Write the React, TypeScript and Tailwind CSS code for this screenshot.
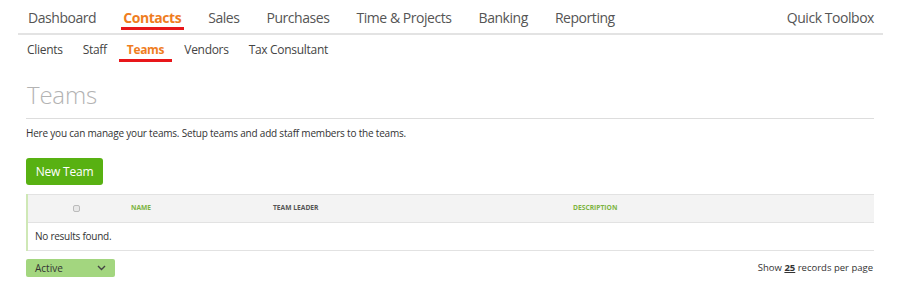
import React from "react";

const topItems = ["Dashboard", "Contacts", "Sales", "Purchases", "Time & Projects", "Banking", "Reporting"];
const subItems = ["Clients", "Staff", "Teams", "Vendors", "Tax Consultant"];

export default function App() {
  return (
    <div className="w-[920px] h-[297px] bg-white overflow-hidden" style={{ fontFamily: '"Open Sans", sans-serif' }}>
      {/* Top nav */}
      <div className="ml-[18px] w-[865px] h-[35px] border-b-2 border-[#e3e3e3] flex items-start pt-[8px] pl-[10px] pr-[9px]">
        <div className="flex gap-[27px]">
          {topItems.map((t) => (
            <div
              key={t}
              className={`relative text-[14px] leading-[20px] tracking-[-0.45px] ${t === "Contacts" ? "text-[#ef7d1f] font-bold" : "text-[#555]"}`}
            >
              {t}
              {t === "Contacts" && <span className="absolute left-[-2px] right-[-3px] top-[19px] h-[3px] bg-[#e8161a]" />}
            </div>
          ))}
        </div>
        <div className="ml-auto text-[14px] leading-[20px] tracking-[-0.45px] text-[#555]">Quick Toolbox</div>
      </div>
      {/* Sub nav */}
      <div className="ml-[27px] pt-[6px] flex gap-[20px]">
        {subItems.map((t) => (
          <div
            key={t}
            className={`relative text-[12px] leading-[18px] tracking-[-0.3px] ${t === "Teams" ? "text-[#ef7d1f] font-bold" : "text-[#444]"}`}
          >
            {t}
            {t === "Teams" && <span className="absolute left-[-8px] right-[-8px] top-[18px] h-[3px] bg-[#e8161a]" />}
          </div>
        ))}
      </div>
      {/* Content */}
      <div className="ml-[26px] w-[848px] mt-[21px]">
        <div className="h-[38px] pl-[1px] text-[24px] leading-[30px] font-light text-[#b3b3b3] tracking-[-0.2px]">Teams</div>
        <div className="border-t border-[#dddddd]" />
        <div className="mt-[7px] text-[10px] leading-[14px] tracking-[-0.2px] text-[#333]">
          Here you can manage your teams. Setup teams and add staff members to the teams.
        </div>
        <button className="mt-[18px] w-[77px] h-[27px] rounded-[3px] bg-[#58b112] text-white text-[12px] tracking-[-0.2px] leading-[27px] text-center">
          New Team
        </button>
        {/* Table */}
        <div className="mt-[9px] border-l-2 border-[#cfe8b6]">
          <div className="h-[29px] bg-[#f3f3f3] border-t border-b border-[#e2e2e2] flex items-center text-[6.7px] font-bold">
            <div className="w-[96px] flex justify-center">
              <span className="w-[7px] h-[7px] rounded-[2px] border border-[#bbb] bg-[#e8e8e8]" />
            </div>
            <div className="w-[149px] pl-[7px] text-[#7cb342]">NAME</div>
            <div className="w-[300px] text-[#555]">TEAM LEADER</div>
            <div className="text-[#7cb342]">DESCRIPTION</div>
          </div>
          <div className="h-[28px] border-b border-[#e2e2e2] flex items-center pl-[7px] text-[10px] tracking-[-0.25px] text-[#333]">
            No results found.
          </div>
        </div>
        <div className="mt-[8px] flex items-center justify-between">
          <div className="w-[89px] h-[18px] rounded-[2px] bg-[#a3d67f] flex items-center justify-between pl-[9px] pr-[9px] text-[10px] text-[#333]">
            <span>Active</span>
            <svg width="9" height="6" viewBox="0 0 9 6" fill="none">
              <path d="M1 1l3.5 3.5L8 1" stroke="#444" strokeWidth="1.4" />
            </svg>
          </div>
          <div className="text-[9.5px] text-[#333] pr-[1px]">
            Show <span className="font-bold underline">25</span> records per page
          </div>
        </div>
      </div>
    </div>
  );
}
